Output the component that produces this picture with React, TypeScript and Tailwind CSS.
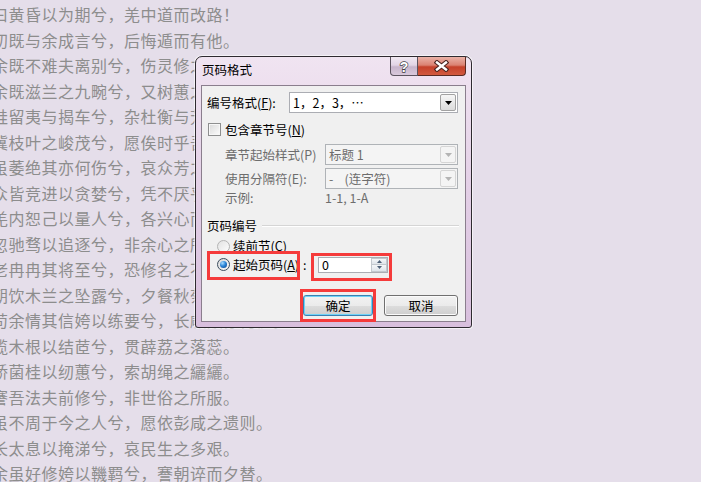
import type { ReactNode } from 'react'

const lines = [
  '曰黄昏以为期兮，羌中道而改路！',
  '初既与余成言兮，后悔遁而有他。',
  '余既不难夫离别兮，伤灵修之数化。',
  '余既滋兰之九畹兮，又树蕙之百亩。',
  '畦留夷与揭车兮，杂杜衡与芳芷。',
  '冀枝叶之峻茂兮，愿俟时乎吾将刈。',
  '虽萎绝其亦何伤兮，哀众芳之芜秽。',
  '众皆竞进以贪婪兮，凭不厌乎求索。',
  '羌内恕己以量人兮，各兴心而嫉妒。',
  '忽驰骛以追逐兮，非余心之所急。',
  '老冉冉其将至兮，恐修名之不立。',
  '朝饮木兰之坠露兮，夕餐秋菊之落英。',
  '苟余情其信姱以练要兮，长顑颔亦何伤。',
  '揽木根以结茝兮，贯薜荔之落蕊。',
  '矫菌桂以纫蕙兮，索胡绳之纚纚。',
  '謇吾法夫前修兮，非世俗之所服。',
  '虽不周于今之人兮，愿依彭咸之遗则。',
  '长太息以掩涕兮，哀民生之多艰。',
  '余虽好修姱以鞿羁兮，謇朝谇而夕替。'
]

function DownArrow({ color }: { color: string }) {
  return (
    <svg width="7" height="4" viewBox="0 0 7 4">
      <path d="M0 0h7L3.5 4z" fill={color} />
    </svg>
  )
}

function Select({ width, value, disabled }: { width: string; value: ReactNode; disabled?: boolean }) {
  return (
    <div
      className={`flex h-[21px] items-center justify-between border ${width} ${
        disabled ? 'border-[#afb3b7] bg-[#f4f4f4] text-[#6d6d6d]' : 'border-[#abadb3] bg-white text-black'
      }`}
    >
      <span className="pl-[3px] whitespace-pre">{value}</span>
      <div
        className={`mr-px flex h-[17px] w-[16px] items-center justify-center rounded-[2px] border ${
          disabled
            ? 'border-[#d5d5d5] bg-[#f4f4f4]'
            : 'border-[#a2a2a2] bg-gradient-to-b from-[#f6f6f6] to-[#dcdcdc]'
        }`}
      >
        <DownArrow color={disabled ? '#b4b4b4' : '#000'} />
      </div>
    </div>
  )
}

function RedBox({ className }: { className: string }) {
  return <div className={`pointer-events-none absolute border-[3px] border-[#f53b3b] ${className}`} />
}

function Radio({ checked }: { checked?: boolean }) {
  return (
    <div
      className={`flex h-[13px] w-[13px] items-center justify-center rounded-full border ${
        checked
          ? 'border-[#3c4d5e] bg-gradient-to-br from-[#d8d8d8] to-[#fbfbfb]'
          : 'border-[#b4b4b4] bg-gradient-to-br from-[#e2e2e2] to-[#fdfdfd]'
      }`}
    >
      {checked && (
        <div className="h-[7px] w-[7px] rounded-full bg-[radial-gradient(circle_at_35%_30%,#a9dcff_0%,#2b86d8_45%,#0b3f86_100%)]" />
      )}
    </div>
  )
}

function WinButton({ label, primary }: { label: string; primary?: boolean }) {
  return (
    <div
      className={`flex h-[21px] items-center justify-center rounded-[3px] border bg-[linear-gradient(#f2f2f2_0%,#ebebeb_50%,#dddddd_51%,#cfcfcf_100%)] text-[12.5px] text-black ${
        primary
          ? 'w-[70px] border-[#3c7fb1] shadow-[inset_0_0_0_1px_#6fd3f7]'
          : 'w-[74px] border-[#707070] shadow-[inset_0_0_0_1px_#fbfbfb]'
      }`}
    >
      {label}
    </div>
  )
}

function Dialog() {
  return (
    <div className="absolute left-[195px] top-[56px] flex h-[272px] w-[277px] flex-col rounded-t-[7px] rounded-b-[3px] border border-[#2e2a30] bg-gradient-to-b from-[#f0e4f1] via-[#e3cfe6] to-[#d8bfdd] px-[5px] pb-[5px] shadow-[0_0_0_1px_rgba(255,255,255,0.6)]">
      {/* title bar */}
      <div className="flex h-[28px] shrink-0 items-start justify-between">
        <div className="pl-px pt-[6px] text-[12.5px] leading-[14px] text-black">页码格式</div>
        <div className="flex">
          <div className="flex h-[19px] w-[28px] items-center justify-center rounded-bl-[4px] border border-t-0 border-[#5b525e] bg-[linear-gradient(#f1e9f2_0%,#e2d4e5_45%,#c7b4cb_55%,#d9c9dc_100%)]">
            <svg width="12" height="15" viewBox="0 0 12 15">
              <text
                x="6"
                y="13"
                textAnchor="middle"
                fontSize="14"
                fontWeight="bold"
                fontFamily="Liberation Sans, sans-serif"
                fill="#fff"
                stroke="#3f3f47"
                strokeWidth="1.3"
                paintOrder="stroke"
              >
                ?
              </text>
            </svg>
          </div>
          <div className="flex h-[19px] w-[48px] items-center justify-center rounded-br-[4px] border border-l-0 border-t-0 border-[#5a2a22] bg-[linear-gradient(#eab2a8_0%,#db8272_45%,#c5412b_55%,#d25a3f_100%)]">
            <svg width="15" height="12" viewBox="0 0 15 12">
              <path d="M3 2.5l9 7M12 2.5l-9 7" stroke="#4a2420" strokeWidth="4.6" strokeLinecap="square" />
              <path d="M3 2.5l9 7M12 2.5l-9 7" stroke="#fff" strokeWidth="2.4" strokeLinecap="square" />
            </svg>
          </div>
        </div>
      </div>

      {/* content */}
      <div className="flex flex-1 flex-col border border-[#8a7e8d] bg-[#f0f0f0] text-[12.5px] leading-[14px] text-black">
        <div className="mt-[6px] flex h-[21px] items-center pl-[5px]">
          <div className="w-[82px]">
            编号格式(<span className="underline">F</span>):
          </div>
          <Select width="w-[169px]" value="1，2，3，…" />
        </div>

        <div className="mt-[10px] flex h-[13px] items-center gap-[4px] pl-[6px]">
          <div className="h-[13px] w-[13px] border border-[#8e8f8f] bg-gradient-to-br from-[#d9d9d9] to-[#fdfdfd] shadow-[inset_0_0_0_1px_#f7f7f7]" />
          <div>
            包含章节号(<span className="underline">N</span>)
          </div>
        </div>

        <div className="mt-[8px] flex h-[21px] items-center pl-[23px] text-[#6d6d6d]">
          <div className="w-[100px]">章节起始样式(P)</div>
          <Select width="w-[133px]" value="标题 1" disabled />
        </div>

        <div className="mt-[3px] flex h-[21px] items-center pl-[23px] text-[#6d6d6d]">
          <div className="w-[100px]">使用分隔符(E):</div>
          <Select width="w-[133px]" value="-    (连字符)" disabled />
        </div>

        <div className="mt-[2px] flex h-[14px] items-center pl-[23px] text-[#6d6d6d]">
          <div className="w-[100px]">示例:</div>
          <div>1-1, 1-A</div>
        </div>

        <div className="mt-[13px] flex h-[16px] items-center gap-[5px] pl-[5px] pr-[6px]">
          <div>页码编号</div>
          <div className="h-[2px] flex-1 border-t border-b border-t-[#d5d5d5] border-b-white" />
        </div>

        <div className="mt-[5px] flex h-[14px] items-center gap-[3px] pl-[15px]">
          <Radio />
          <div>
            续前节(<span className="underline">C</span>)
          </div>
        </div>

        <div className="mt-[3px] flex h-[17px] items-center pl-[15px]">
          <div className="relative flex w-[86px] items-center gap-[3px]">
            <Radio checked />
            <div>
              起始页码(<span className="underline">A</span>)
            </div>
            <RedBox className="left-[-10px] top-[-7px] h-[29px] w-[93px]" />
          </div>
          <div className="w-[15px]">:</div>
          <div className="relative flex h-[16px] w-[70px] items-center justify-between border border-[#abadb3] bg-white">
            <span className="pl-[3px]">0</span>
            <div className="flex h-full w-[16px] flex-col">
              <div className="flex flex-1 items-center justify-center border border-[#c3c8ce] bg-gradient-to-b from-[#f5f7f9] to-[#dfe4ea]">
                <svg width="5" height="3" viewBox="0 0 5 3">
                  <path d="M0 3h5L2.5 0z" fill="#4f6178" />
                </svg>
              </div>
              <div className="flex flex-1 items-center justify-center border border-t-0 border-[#c3c8ce] bg-gradient-to-b from-[#f5f7f9] to-[#dfe4ea]">
                <svg width="5" height="3" viewBox="0 0 5 3">
                  <path d="M0 0h5L2.5 3z" fill="#4f6178" />
                </svg>
              </div>
            </div>
            <RedBox className="left-[-8px] top-[-5px] h-[28px] w-[81px]" />
          </div>
        </div>

        <div className="mt-[22px] flex h-[21px] items-center gap-[11px] pl-[101px]">
          <div className="relative">
            <WinButton label="确定" primary />
            <RedBox className="left-[-3px] top-[-6px] h-[33px] w-[76px]" />
          </div>
          <WinButton label="取消" />
        </div>
      </div>
    </div>
  )
}

export default function App() {
  return (
    <div className="relative h-[482px] w-[701px] overflow-hidden bg-[#e5deea] font-['Noto_Sans_CJK_SC','Noto_Sans',sans-serif]">
      <div className="-ml-2 pt-[2px] text-[16px] leading-[25.5px] tracking-[0.5px] whitespace-nowrap text-[#8d8d8d]">
        {lines.map((l) => (
          <div key={l}>{l}</div>
        ))}
      </div>
      <Dialog />
    </div>
  )
}
